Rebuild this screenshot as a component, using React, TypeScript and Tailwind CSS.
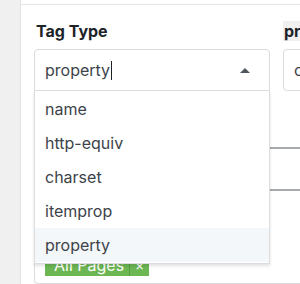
import React from "react";

const font = { fontFamily: "Inter, 'Noto Sans', sans-serif" };

export default function App() {
  const options = ["name", "http-equiv", "charset", "itemprop", "property"];
  return (
    <div className="w-[300px] h-[284px] bg-[#f0f0f1] flex overflow-hidden" style={font}>
      <div className="w-[20px] shrink-0" />
      <div className="flex-1 bg-white border-l border-[#e2e2e4] pt-[4px] overflow-hidden">
        <div className="border-t border-[#e6e6e8] h-full relative">
          <div className="flex gap-[13px] pl-[13px] pt-[16px]">
            {/* first column */}
            <div className="w-[236px] shrink-0 relative">
              <div className="pl-[2px] text-[16px] font-bold text-[#1d2327] leading-[20px] h-[28px]">Tag Type</div>
              <div className="h-[42px] border border-[#dcdcde] rounded-t-[4px] flex items-center pl-[10px] pr-[19px] text-[16px] text-[#3c434a]">
                <span>property</span>
                <span className="w-px h-[19px] bg-[#1d2327] ml-px" />
                <span className="flex-1" />
                <span className="w-0 h-0 border-l-[5px] border-r-[5px] border-b-[5px] border-l-transparent border-r-transparent border-b-[#50575e]" />
              </div>
              <div className="absolute left-0 top-[70px] w-[236px] bg-white border border-t-0 border-[#dcdcde] pt-px pb-px shadow-[0_2px_3px_rgba(0,0,0,0.12)] z-10">
                {options.map((o, i) => (
                  <div
                    key={o}
                    className={
                      "h-[34px] flex items-center pl-[10px] text-[16px] text-[#3c434a] " +
                      (i === options.length - 1 ? "bg-[#f4f7fa]" : "")
                    }
                  >
                    {o}
                  </div>
                ))}
              </div>
            </div>
            {/* second column */}
            <div className="flex-1 min-w-0">
              <div className="h-[28px] flex items-start">
                <span className="bg-[#f0f0f1] text-[16px] font-bold text-[#1d2327] leading-[20px] pl-[1px] pr-[4px]">property</span>
              </div>
              <div className="h-[42px] w-[60px] border border-[#dcdcde] rounded-[4px] flex items-center pl-[10px] text-[16px] text-[#3c434a]">
                content
              </div>
            </div>
          </div>
          {/* rows behind dropdown */}
          <div className="pl-[13px]">
            <div className="h-[56px]" />
            <div className="h-[42px] border-t-2 border-[#a7aaad]" />
            <div className="h-[42px] border-t-2 border-[#a7aaad]" />
            <div className="h-[22px]" />
            <div className="border border-t-0 border-[#dcdcde] rounded-b-[4px] pl-[10px] pb-[6px] w-[300px]">
              <div className="inline-flex h-[22px] bg-[#6cb654] text-white text-[16px] leading-[22px] items-center overflow-hidden">
                <span className="pl-[9px] pr-[5px]">All Pages</span>
                <span className="border-l border-[#5a9c44] w-[20px] text-center text-[14px]">×</span>
              </div>
            </div>
          </div>
        </div>
      </div>
    </div>
  );
}
